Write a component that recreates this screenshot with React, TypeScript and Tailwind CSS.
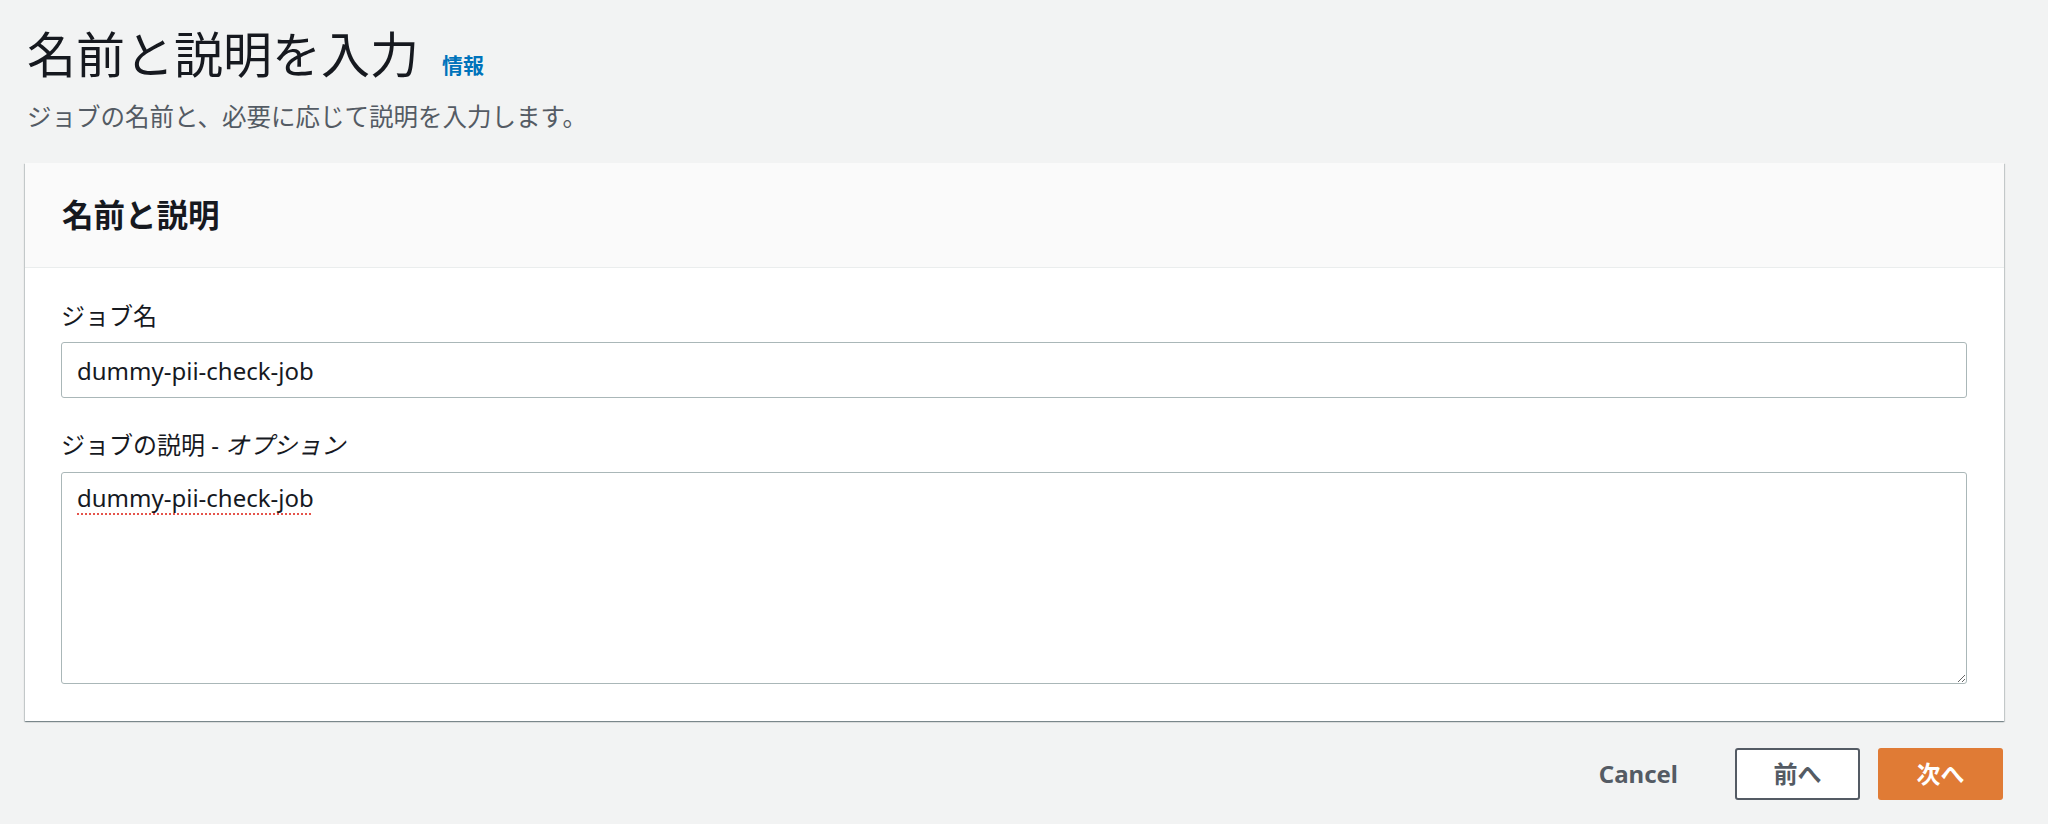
import React from 'react';

const font = { fontFamily: '"Noto Sans", "Noto Sans CJK JP", sans-serif' };

const App: React.FC = () => {
    return (
        <div className="bg-[#f2f3f3] min-h-screen w-full text-[#16191f]" style={font}>
            <div className="pl-[25px] pr-[44px] pt-[28px]">
                {/* Page header */}
                <div className="flex items-baseline pl-[2px] h-[52px]">
                    <h1 className="text-[49px] leading-[52px] font-normal">名前と説明を入力</h1>
                    <a className="ml-[23px] text-[21px] font-bold text-[#0073bb]">情報</a>
                </div>
                <p className="mt-[22px] pl-[2px] text-[24.5px] leading-[30px] text-[#545b64]">
                    ジョブの名前と、必要に応じて説明を入力します。
                </p>

                {/* Card */}
                <div className="mt-[31px] bg-white shadow-[0_1px_1px_0_rgba(0,28,36,0.3),1px_1px_1px_0_rgba(0,28,36,0.15),-1px_1px_1px_0_rgba(0,28,36,0.15)]">
                    <div className="h-[105px] flex items-center pl-[37px] bg-[#fafafa] border-b border-[#eaeded]">
                        <h2 className="text-[31.5px] font-bold leading-[40px]">名前と説明</h2>
                    </div>
                    <div className="pl-[36px] pr-[37px] pt-[33px] pb-[37px]">
                        <label className="block text-[24px] leading-[30px]">ジョブ名</label>
                        <input
                            defaultValue="dummy-pii-check-job"
                            className="mt-[11px] block w-full h-[56px] px-[15px] text-[24px] bg-white border border-[#aab7b8] rounded-[3px] outline-none"
                        />
                        <label className="block mt-[32px] text-[24px] leading-[30px]">
                            ジョブの説明 - <i>オプション</i>
                        </label>
                        <textarea
                            defaultValue="dummy-pii-check-job"
                            className="mt-[12px] block w-full h-[212px] px-[15px] py-[10px] text-[24px] leading-[30px] bg-white border border-[#aab7b8] rounded-[3px] outline-none resize-y underline decoration-dotted decoration-[#e5534b] decoration-2 underline-offset-[6px]"
                        />
                    </div>
                </div>

                {/* Actions */}
                <div className="mt-[27px] flex items-center justify-end pr-[1px]">
                    <button className="mr-[57px] text-[24px] font-bold text-[#545b64]">Cancel</button>
                    <button className="w-[125px] h-[52px] mr-[18px] border-2 border-[#545b64] rounded-[3px] bg-white text-[24px] font-bold text-[#545b64]">
                        前へ
                    </button>
                    <button className="w-[125px] h-[52px] rounded-[3px] bg-[#e07b35] text-[24px] font-bold text-white">
                        次へ
                    </button>
                </div>
            </div>
        </div>
    );
};

export default App;
